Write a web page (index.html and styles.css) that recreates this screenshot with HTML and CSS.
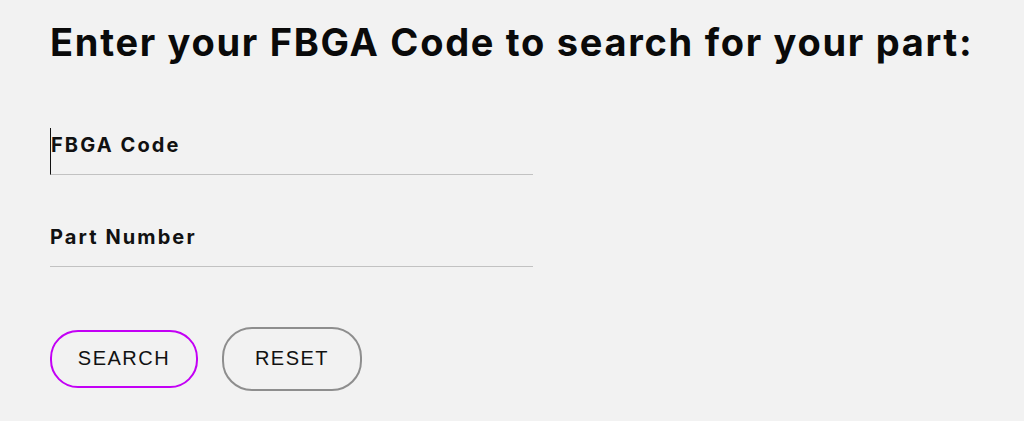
FILE: index.html
```html
<!DOCTYPE html>
<html lang="en">

<head>
  <meta charset="UTF-8" />
  <meta name="viewport" content="width=device-width, initial-scale=1.0" />
  <title>FBGA Code Search</title>
  <link rel="stylesheet" href="styles.css">
</head>

<body>
  <div class="w">
    <h1 class="title">Enter your FBGA Code to search for your part:</h1>

    <!-- search form -->
    <form class="fbga-form" onsubmit="return false">
      <div class="field is-focused">
        <span class="field-label">FBGA Code</span>
      </div>
      <div class="field">
        <span class="field-label">Part Number</span>
      </div>

      <div class="actions">
        <button class="btn btn-search" type="submit">SEARCH</button>
        <button class="btn btn-reset" type="reset">RESET</button>
      </div>
    </form>
  </div>
</body>

</html>
```

FILE: styles.css
```css
* {
  margin: 0;
  padding: 0;
  box-sizing: border-box;
}

body {
  background: #f2f2f2;
  color: #0a0a0a;
  font-family: Inter, "Liberation Sans", Arial, sans-serif;
}

.w {
  padding: 20px 0 0 50px;
}

.title {
  font-size: 38px;
  line-height: 1.2;
  font-weight: bold;
  letter-spacing: 1.7px;
}

.fbga-form {
  width: 483px;
  margin-top: 62px;
}

.field {
  height: 47px;
  padding-top: 8px;
  border-bottom: 1px solid #c2c2c2;
  margin-bottom: 45px;
}

/* text caret of the active input */
.field.is-focused {
  border-left: 1px solid #111;
}

.field-label {
  font-size: 20px;
  line-height: 19px;
  font-weight: bold;
  letter-spacing: 2.1px;
  color: #111;
}

.actions {
  display: flex;
  align-items: center;
  gap: 24px;
  margin-top: 60px;
}

.btn {
  background: transparent;
  font-family: "Liberation Sans", Arial, sans-serif;
  font-size: 20px;
  letter-spacing: 1.5px;
  color: #111;
  border-radius: 28px;
  cursor: pointer;
  outline: none;
}

.btn-search {
  width: 148px;
  height: 58px;
  border: 2px solid #c300f5;
}

.btn-reset {
  width: 140px;
  height: 64px;
  border: 2px solid #8e8e8e;
  border-radius: 30px;
}
```
